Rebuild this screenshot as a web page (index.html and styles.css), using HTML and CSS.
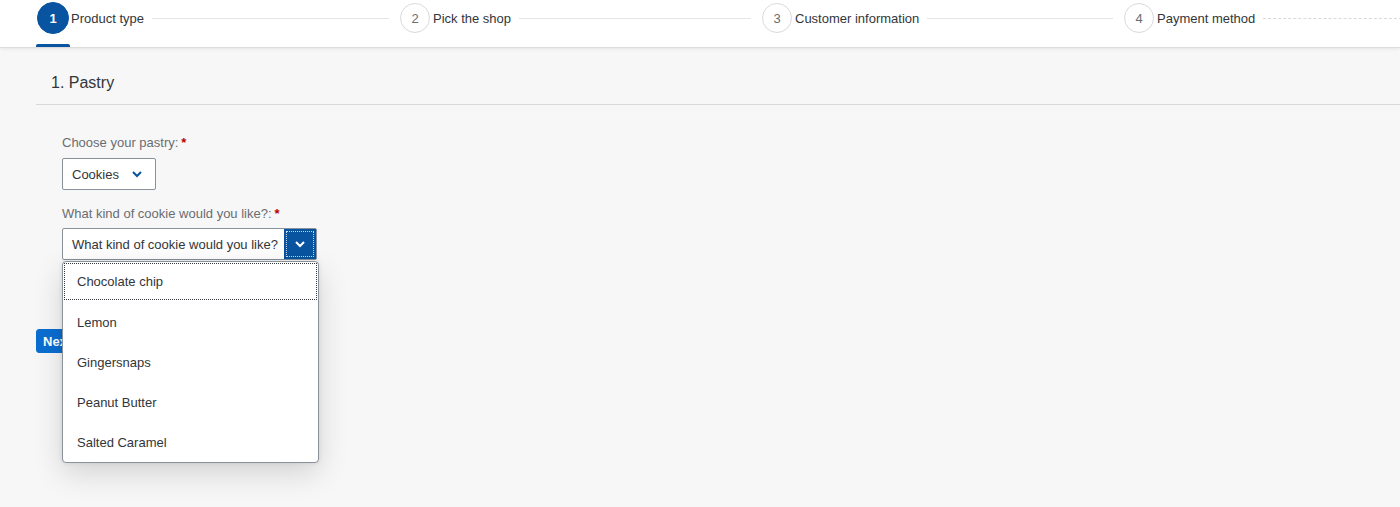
FILE: index.html
```html
<!DOCTYPE html>
<html lang="en">
<head>
<meta charset="utf-8">
<title>Wizard</title>
<link rel="stylesheet" href="styles.css">
</head>
<body>
<header class="steps">
  <div class="step active">
    <span class="num">1</span><span class="title">Product type</span><span class="line"></span>
    <span class="indicator"></span>
  </div>
  <div class="step">
    <span class="num">2</span><span class="title">Pick the shop</span><span class="line"></span>
  </div>
  <div class="step">
    <span class="num">3</span><span class="title">Customer information</span><span class="line"></span>
  </div>
  <div class="step last">
    <span class="num">4</span><span class="title">Payment method</span><span class="line dashed"></span>
  </div>
</header>
<main class="content">
  <h2 class="section-title">1. Pastry</h2>
  <div class="form">
    <label class="label">Choose your pastry:<span class="req">*</span></label>
    <div class="select small">
      <span>Cookies</span>
      <svg class="chev" width="12" height="8" viewBox="0 0 12 8"><path d="M2 2 L6 6 L10 2" fill="none" stroke="#0854a0" stroke-width="2"/></svg>
    </div>
    <label class="label second">What kind of cookie would you like?:<span class="req">*</span></label>
    <div class="combo-wrap">
      <div class="combo">
        <span class="combo-text">What kind of cookie would you like?</span>
        <span class="combo-btn"><svg width="12" height="8" viewBox="0 0 12 8"><path d="M2 2 L6 6 L10 2" fill="none" stroke="#ffffff" stroke-width="2"/></svg></span>
      </div>
      <ul class="list">
        <li class="focus">Chocolate chip</li>
        <li>Lemon</li>
        <li>Gingersnaps</li>
        <li>Peanut Butter</li>
        <li>Salted Caramel</li>
      </ul>
    </div>
  </div>
  <button class="next">Next</button>
</main>
</body>
</html>
```
FILE: styles.css
```css
* { box-sizing: border-box; }
html, body { margin: 0; padding: 0; }
body {
  background: #f7f7f7;
  font-family: "Liberation Sans", Arial, sans-serif;
  color: #32363a;
  width: 1400px;
  height: 507px;
  overflow: hidden;
}
.steps {
  height: 47px;
  background: #fff;
  box-shadow: 0 1px 0 #dcdcdc, 0 2px 3px rgba(0,0,0,0.08);
  display: flex;
  padding-left: 37px;
  overflow: hidden;
  white-space: nowrap;
  position: relative;
  z-index: 1;
}
.step {
  flex: 0 0 362px;
  display: flex;
  align-items: center;
  height: 36px;
  position: relative;
}
.num {
  width: 30px;
  height: 30px;
  border-radius: 50%;
  border: 1px solid #d9d9d9;
  display: flex;
  align-items: center;
  justify-content: center;
  font-size: 13px;
  color: #6a6d70;
  flex: 0 0 auto;
  margin-left: 1px;
  background: #fff;
}
.step.active .num {
  width: 32px;
  height: 32px;
  margin-left: 0;
  background: #0854a0;
  border-color: #0854a0;
  color: #fff;
  font-weight: bold;
}
.title {
  font-size: 13px;
  color: #32363a;
  margin-left: 3px;
  margin-right: 8px;
}
.step.active .title { margin-left: 2px; }
.line {
  flex: 1;
  border-top: 1px solid #e5e5e5;
  margin-right: 10px;
}
.line.dashed { border-top: 1px dashed #d9d9d9; margin-right: 0; }
.step.last { flex: 0 0 400px; }
.indicator {
  position: absolute;
  left: -1px;
  top: 44px;
  width: 34px;
  height: 3px;
  background: #0854a0;
  border-radius: 2px 2px 0 0;
}
.content {
  padding: 0 0 0 36px;
  position: relative;
}
.section-title {
  margin: 0;
  font-weight: normal;
  font-size: 16px;
  color: #32363a;
  padding: 27px 0 0 15px;
  height: 58px;
  border-bottom: 1px solid #d9d9d9;
}
.form {
  padding: 29px 0 0 26px;
  display: flex;
  flex-direction: column;
  align-items: flex-start;
}
.label {
  font-size: 13px;
  color: #6a6d70;
  height: 17px;
  line-height: 17px;
}
.label.second { margin-top: 15px; }
.req { color: #bb0000; margin-left: 3px; font-weight: bold; }
.select {
  margin-top: 7px;
  height: 32px;
  width: 94px;
  background: #fff;
  border: 1px solid #89919a;
  border-radius: 2px;
  display: flex;
  align-items: center;
  justify-content: space-between;
  padding: 0 12px 0 9px;
  font-size: 13px;
  color: #32363a;
}
.combo-wrap {
  position: relative;
  margin-top: 6px;
}
.combo {
  width: 255px;
  height: 32px;
  background: #fff;
  border: 1px solid #89919a;
  border-radius: 2px;
  display: flex;
  align-items: center;
  justify-content: space-between;
  padding: 0 0 0 9px;
  font-size: 13px;
  color: #32363a;
}
.combo-btn {
  width: 32px;
  height: 30px;
  background: #0854a0;
  outline: 1px dotted #c8d8ec;
  outline-offset: -3px;
  display: flex;
  align-items: center;
  justify-content: center;
}
.list {
  position: absolute;
  left: 0;
  top: 33px;
  margin: 0;
  padding: 0;
  list-style: none;
  width: 257px;
  background: #fff;
  border: 1px solid #89919a;
  border-radius: 4px;
  box-shadow: 0 10px 30px rgba(0,0,0,0.15), 0 0 4px rgba(0,0,0,0.1);
  z-index: 2;
}
.list li {
  height: 40px;
  display: flex;
  align-items: center;
  padding-left: 14px;
  font-size: 13px;
  color: #32363a;
}
.list li.focus {
  height: 39px;
  outline: 1px dotted #32363a;
  outline-offset: -2px;
  margin-bottom: 1px;
}
.next {
  margin-top: 69px;
  height: 24px;
  width: 70px;
  background: #0a6ed1;
  color: #fff;
  border: 1px solid #0a6ed1;
  border-radius: 3px;
  font-family: "Liberation Sans", Arial, sans-serif;
  font-weight: bold;
  font-size: 13px;
  text-align: left;
  padding: 0 0 0 6px;
  display: block;
}
```
